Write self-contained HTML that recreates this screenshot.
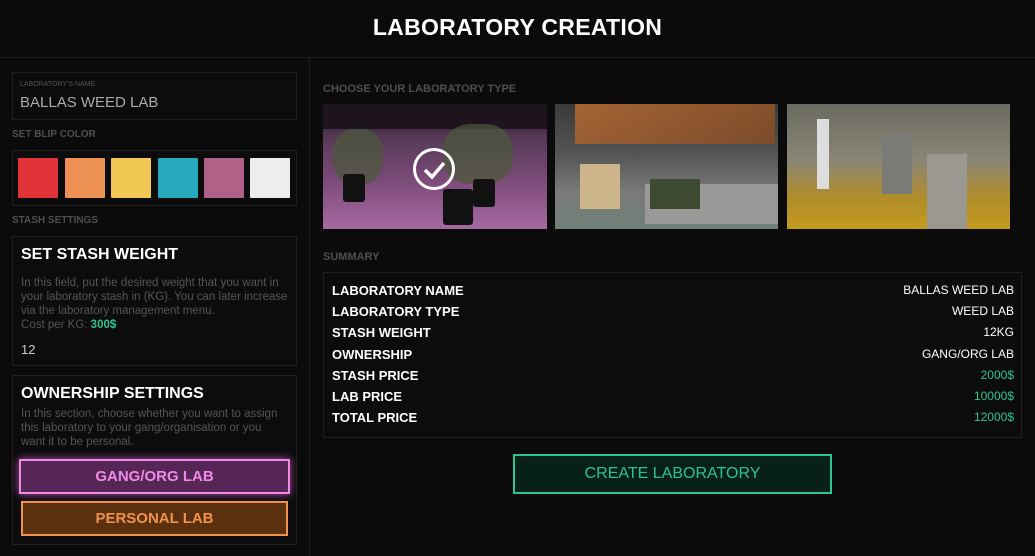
<!DOCTYPE html>
<html><head><meta charset="utf-8"><style>
*{box-sizing:border-box;margin:0;padding:0}
body{width:1035px;height:556px;background:#0b0b0b;font-family:"Liberation Sans",sans-serif;color:#fff;position:relative;overflow:hidden}
.hdr{position:absolute;left:0;top:0;width:1035px;height:58px;border-bottom:1px solid #1e1e1e;text-align:center;font-weight:bold;font-size:23px;line-height:55px;letter-spacing:.3px}
.vline{position:absolute;left:309px;top:58px;width:1px;height:498px;background:#1e1e1e}
.box{position:absolute;border:1px solid #202020;background:#0c0c0c}
.lbl{position:absolute;color:#4f4f4f;font-size:11px;font-weight:bold}
.sw{position:absolute;top:158px;width:40px;height:40px;border-radius:1px}
.t{position:absolute;font-weight:bold;font-size:16px}
.p{position:absolute;color:#555;font-size:11.5px;line-height:14px}
.btn{position:absolute;text-align:center;font-weight:bold;font-size:15px}
.img{position:absolute;top:104px;height:125px;overflow:hidden}
.img div{position:absolute}
.row{position:absolute;left:332px;width:682px;font-size:13px;font-weight:bold}
.row span{position:absolute;right:0;font-weight:normal;font-size:12px}
.g{color:#2bc592}
</style></head><body>
<div class="hdr">LABORATORY CREATION</div>
<div class="vline"></div>

<div class="box" style="left:12px;top:72px;width:285px;height:48px"></div>
<div class="lbl" style="left:20px;top:81px;font-size:7px;font-weight:normal;color:#555">LABORATORY'S NAME</div>
<div style="position:absolute;left:20px;top:94px;font-size:15px;color:#aaa">BALLAS WEED LAB</div>
<div class="lbl" style="left:12px;top:129px;font-size:10px">SET BLIP COLOR</div>
<div class="box" style="left:12px;top:150px;width:285px;height:56px"></div>
<div class="sw" style="left:18px;background:#e03438"></div>
<div class="sw" style="left:65px;background:#ec9054"></div>
<div class="sw" style="left:111px;background:#f1c853"></div>
<div class="sw" style="left:158px;background:#28a8bc"></div>
<div class="sw" style="left:204px;background:#b06187"></div>
<div class="sw" style="left:250px;background:#eeeeee"></div>
<div class="lbl" style="left:12px;top:215px;font-size:10px">STASH SETTINGS</div>
<div class="box" style="left:12px;top:236px;width:285px;height:130px"></div>
<div class="t" style="left:21px;top:246px">SET STASH WEIGHT</div>
<div class="p" style="left:21px;top:276px">In this field, put the desired weight that you want in<br>your laboratory stash in (KG). You can later increase<br>via the laboratory management menu.<br>Cost per KG: <span class="g" style="font-weight:bold">300$</span></div>
<div style="position:absolute;left:21px;top:342px;font-size:13px;color:#ccc">12</div>
<div class="box" style="left:12px;top:375px;width:285px;height:170px"></div>
<div class="t" style="left:21px;top:385px">OWNERSHIP SETTINGS</div>
<div class="p" style="left:21px;top:407px">In this section, choose whether you want to assign<br>this laboratory to your gang/organisation or you<br>want it to be personal.</div>
<div class="btn" style="left:19px;top:459px;width:271px;height:35px;background:#562756;border:2px solid #f08ae8;color:#f08ae8;line-height:31px;box-shadow:0 0 8px #b052a8">GANG/ORG LAB</div>
<div class="btn" style="left:21px;top:501px;width:267px;height:35px;background:#5a300f;border:2px solid #f0924e;color:#f0924e;line-height:31px">PERSONAL LAB</div>

<div class="lbl" style="left:323px;top:83px;font-size:11px">CHOOSE YOUR LABORATORY TYPE</div>
<div class="img" style="left:323px;width:224px;background:linear-gradient(180deg,#2a1a2a 0%,#5a3b5a 30%,#7a4a78 60%,#a66aa2 100%)">
 <div style="left:0;top:0;width:224px;height:25px;background:#1e141e"></div>
 <div style="left:10px;top:25px;width:50px;height:55px;background:#4a5a3a;border-radius:40%;opacity:.7"></div>
 <div style="left:120px;top:20px;width:70px;height:60px;background:#4a5a3a;border-radius:40%;opacity:.7"></div>
 <div style="left:20px;top:70px;width:22px;height:28px;background:#111;border-radius:3px"></div>
 <div style="left:120px;top:85px;width:30px;height:36px;background:#111;border-radius:3px"></div>
 <div style="left:150px;top:75px;width:22px;height:28px;background:#111;border-radius:3px"></div>
 <div style="left:90px;top:44px;width:42px;height:42px;border:3px solid #fff;border-radius:50%"></div>
 <svg style="position:absolute;left:90px;top:44px" width="42" height="42"><path d="M12 22 L19 29 L31 15" stroke="#fff" stroke-width="3.5" fill="none"/></svg>
</div>
<div class="img" style="left:555px;width:223px;background:linear-gradient(180deg,#3a3a3a 0%,#555 40%,#7a7a78 70%,#6e8078 100%)">
 <div style="left:20px;top:0;width:200px;height:40px;background:linear-gradient(160deg,#c7722e,#8a4a20);opacity:.75"></div>
 <div style="left:25px;top:60px;width:40px;height:45px;background:#cdb68c"></div>
 <div style="left:90px;top:80px;width:133px;height:40px;background:#9a9a98"></div>
 <div style="left:95px;top:75px;width:50px;height:30px;background:#3f4a32"></div>
</div>
<div class="img" style="left:787px;width:223px;background:linear-gradient(180deg,#6a6a60 0%,#8a8676 45%,#b08d2a 75%,#c49a20 100%)">
 <div style="left:140px;top:50px;width:40px;height:75px;background:#9a9890"></div>
 <div style="left:95px;top:30px;width:30px;height:60px;background:#7a7a76"></div>
 <div style="left:30px;top:15px;width:12px;height:70px;background:#ddd"></div>
</div>

<div class="lbl" style="left:323px;top:251px;font-size:11px">SUMMARY</div>
<div class="box" style="left:323px;top:272px;width:699px;height:166px"></div>
<div class="row" style="top:283px">LABORATORY NAME<span>BALLAS WEED LAB</span></div>
<div class="row" style="top:304px">LABORATORY TYPE<span>WEED LAB</span></div>
<div class="row" style="top:325px">STASH WEIGHT<span>12KG</span></div>
<div class="row" style="top:347px">OWNERSHIP<span>GANG/ORG LAB</span></div>
<div class="row" style="top:368px">STASH PRICE<span class="g">2000$</span></div>
<div class="row" style="top:389px">LAB PRICE<span class="g">10000$</span></div>
<div class="row" style="top:410px">TOTAL PRICE<span class="g">12000$</span></div>
<div class="btn" style="left:513px;top:454px;width:319px;height:40px;background:#072018;border:2px solid #2bc592;color:#2bc592;line-height:36px;font-weight:normal;font-size:16px">CREATE LABORATORY</div>
</body></html>
